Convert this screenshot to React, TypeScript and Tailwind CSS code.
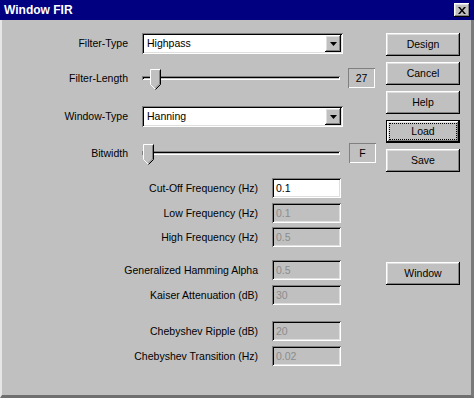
import React from 'react';

const raised =
  'shadow-[inset_-1px_-1px_#000,inset_1px_1px_#fff,inset_-2px_-2px_#808080,inset_2px_2px_#dfdfdf]';
const sunken =
  'shadow-[inset_1px_1px_#808080,inset_-1px_-1px_#fff,inset_2px_2px_#000,inset_-2px_-2px_#dfdfdf]';

function Label({ children, w }: { children: React.ReactNode; w: string }) {
  return <div className={`${w} shrink-0 text-right leading-none`}>{children}</div>;
}

function Combo({ value }: { value: string }) {
  return (
    <div className={`flex h-[21px] w-[201px] items-center bg-white pl-[5px] pr-[2px] ${sunken}`}>
      <span className="flex-1 leading-none">{value}</span>
      <div className={`flex h-[17px] w-[16px] items-center justify-center bg-[#c0c0c0] ${raised}`}>
        <svg width="7" height="4" viewBox="0 0 7 4">
          <polygon points="0,0 7,0 3.5,4" fill="#000" />
        </svg>
      </div>
    </div>
  );
}

function Thumb() {
  return (
    <svg width="11" height="21" viewBox="0 0 11 21" className="block">
      <polygon points="0.5,0.5 10.5,0.5 10.5,15.5 5.5,20.5 0.5,15.5" fill="#c0c0c0" />
      <polyline points="0.5,15.5 0.5,0.5 10.5,0.5" fill="none" stroke="#fff" />
      <line x1="0.5" y1="15.5" x2="5" y2="20" stroke="#fff" />
      <polyline points="10.5,0.5 10.5,15.5 5.5,20.5" fill="none" stroke="#000" />
      <polyline points="9.5,1.5 9.5,15 5.5,19" fill="none" stroke="#808080" />
    </svg>
  );
}

function Slider({ offset }: { offset: number }) {
  return (
    <div className="relative flex h-[22px] w-[198px] items-center">
      <div className="h-[4px] w-full bg-[#c0c0c0] shadow-[inset_1px_1px_#808080,inset_-1px_-1px_#fff,inset_2px_2px_#000]" />
      <div className="absolute top-[2px]" style={{ left: offset }}>
        <Thumb />
      </div>
    </div>
  );
}

function ValueBox({ value }: { value: string }) {
  return (
    <div className="flex h-[20px] w-[27px] items-center justify-center leading-none shadow-[inset_1px_1px_#808080,inset_-1px_-1px_#fff]">
      {value}
    </div>
  );
}

function Field({ value, enabled }: { value: string; enabled?: boolean }) {
  return (
    <div
      className={`flex h-[20px] w-[69px] items-center pl-[4px] leading-none ${sunken} ${
        enabled ? 'bg-white text-black' : 'bg-[#c0c0c0] text-[#8c8c8c]'
      }`}
    >
      {value}
    </div>
  );
}

function FieldRow({ label, value, enabled, mt }: { label: string; value: string; enabled?: boolean; mt: string }) {
  return (
    <div className={`flex items-center gap-[14px] ${mt}`}>
      <Label w="w-[256px]">{label}</Label>
      <Field value={value} enabled={enabled} />
    </div>
  );
}

function Button({ children, focused, mt }: { children: React.ReactNode; focused?: boolean; mt?: string }) {
  if (focused) {
    return (
      <div className={`h-[23px] w-[74px] border border-black ${mt ?? ''}`}>
        <div className={`flex h-full w-full items-center justify-center p-[2px] ${raised}`}>
          <div className="flex h-full w-full items-center justify-center border border-dotted border-black leading-none">
            {children}
          </div>
        </div>
      </div>
    );
  }
  return (
    <div className={`flex h-[23px] w-[74px] items-center justify-center leading-none ${raised} ${mt ?? ''}`}>
      {children}
    </div>
  );
}

export default function App() {
  return (
    <div className="flex h-[398px] w-[474px] flex-col bg-[#c0c0c0] font-['Liberation_Sans',Arial,sans-serif] text-[10.5px] text-black">
      {/* title bar */}
      <div className="flex h-[20px] shrink-0 items-center bg-[#000080] pl-[4px] pr-[4px]">
        <span className="flex-1 text-[12px] font-bold leading-none text-white">Window FIR</span>
        <div className={`flex h-[14px] w-[16px] items-center justify-center bg-[#c0c0c0] ${raised}`}>
          <svg width="8" height="7" viewBox="0 0 8 7">
            <path d="M0 0h2l2 2.5L6 0h2L5 3.5 8 7H6L4 4.5 2 7H0l3-3.5z" fill="#000" />
          </svg>
        </div>
      </div>

      {/* body */}
      <div className="flex flex-1 border-b-[3px] border-l-[2px] border-r-[3px] border-b-[#6f6f6f] border-l-[#e6e6e6] border-r-[#7a7a7a]">
        <div className="flex w-[373px] flex-col">
          <div className="mt-[13px] flex items-center gap-[14px]">
            <Label w="w-[126px]">Filter-Type</Label>
            <Combo value="Highpass" />
          </div>
          <div className="mt-[13px] flex items-center">
            <Label w="w-[126px]">Filter-Length</Label>
            <div className="ml-[14px]">
              <Slider offset={8} />
            </div>
            <div className="ml-[8px]">
              <ValueBox value="27" />
            </div>
          </div>
          <div className="mt-[17px] flex items-center gap-[14px]">
            <Label w="w-[126px]">Window-Type</Label>
            <Combo value="Hanning" />
          </div>
          <div className="mt-[15px] flex items-center">
            <Label w="w-[126px]">Bitwidth</Label>
            <div className="ml-[14px]">
              <Slider offset={1} />
            </div>
            <div className="ml-[9px]">
              <ValueBox value="F" />
            </div>
          </div>

          <FieldRow mt="mt-[14px]" label="Cut-Off Frequency (Hz)" value="0.1" enabled />
          <FieldRow mt="mt-[5px]" label="Low Frequency (Hz)" value="0.1" />
          <FieldRow mt="mt-[4px]" label="High Frequency (Hz)" value="0.5" />

          <FieldRow mt="mt-[13px]" label="Generalized Hamming Alpha" value="0.5" />
          <FieldRow mt="mt-[5px]" label="Kaiser Attenuation (dB)" value="30" />

          <FieldRow mt="mt-[16px]" label="Chebyshev Ripple (dB)" value="20" />
          <FieldRow mt="mt-[5px]" label="Chebyshev Transition (Hz)" value="0.02" />
        </div>

        <div className="ml-[11px] flex flex-col">
          <Button mt="mt-[13px]">Design</Button>
          <Button mt="mt-[6px]">Cancel</Button>
          <Button mt="mt-[6px]">Help</Button>
          <Button mt="mt-[6px]" focused>
            Load
          </Button>
          <Button mt="mt-[6px]">Save</Button>
          <Button mt="mt-[90px]">Window</Button>
        </div>
      </div>
    </div>
  );
}
